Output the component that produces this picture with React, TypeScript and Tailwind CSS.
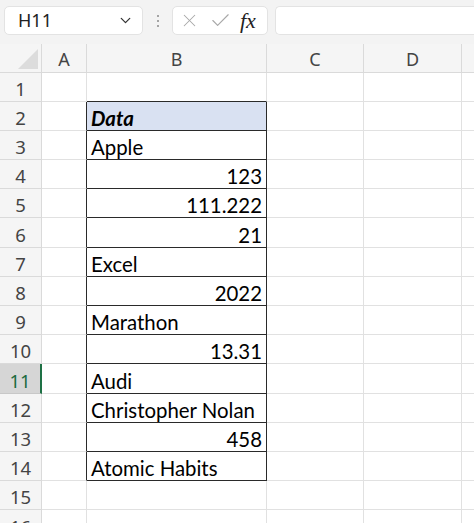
import { ChevronDown, X, Check } from "lucide-react";

type Cell = { text: string; align?: "left" | "right"; head?: boolean };

const rows: Record<number, Cell> = {
  2: { text: "Data", head: true },
  3: { text: "Apple" },
  4: { text: "123", align: "right" },
  5: { text: "111.222", align: "right" },
  6: { text: "21", align: "right" },
  7: { text: "Excel" },
  8: { text: "2022", align: "right" },
  9: { text: "Marathon" },
  10: { text: "13.31", align: "right" },
  11: { text: "Audi" },
  12: { text: "Christopher Nolan" },
  13: { text: "458", align: "right" },
  14: { text: "Atomic Habits" },
};

const uiFont = { fontFamily: '"Noto Sans", "Open Sans", sans-serif' };
const cellFont = { fontFamily: 'Lato, "Noto Sans", sans-serif' };

function FormulaBar() {
  return (
    <div className="flex h-[44px] items-start bg-[#f3f3f3] pt-[6px] pl-[4px]">
      <div
        className="flex h-[29px] w-[139px] items-center justify-between rounded-[5px] border border-[#e3e3e3] bg-white pl-[13px] pr-[8px] text-[18px] text-[#222]"
        style={uiFont}
      >
        <span>H11</span>
        <ChevronDown size={17} strokeWidth={1.8} className="text-[#333]" />
      </div>
      <div className="flex h-[29px] w-[29px] flex-col items-center justify-center gap-[3px]">
        <span className="h-[2px] w-[2px] rounded-full bg-[#8a8a8a]" />
        <span className="h-[2px] w-[2px] rounded-full bg-[#8a8a8a]" />
        <span className="h-[2px] w-[2px] rounded-full bg-[#8a8a8a]" />
      </div>
      <div className="flex h-[29px] w-[96px] items-center rounded-[5px] border border-[#e3e3e3] bg-white pl-[6px]">
        <X size={21} strokeWidth={1.2} className="text-[#a8a8a8]" />
        <Check size={23} strokeWidth={1.2} className="ml-[9px] text-[#a8a8a8]" />
        <span
          className="ml-[8px] text-[22px] italic leading-none text-[#222]"
          style={{ fontFamily: '"Liberation Serif", "DejaVu Serif", serif' }}
        >
          fx
        </span>
      </div>
      <div className="ml-[7px] h-[29px] flex-1 rounded-l-[5px] border border-r-0 border-[#e3e3e3] bg-white" />
    </div>
  );
}

function ColumnHeader() {
  const cols = ["A", "B", "C", "D"];
  const widths = ["w-[45px]", "w-[180px]", "w-[97px]", "w-[98px]"];
  return (
    <div className="flex h-[28.5px] bg-[#f5f5f5] text-[18px] text-[#444]" style={uiFont}>
      <div className="relative w-[42px] shrink-0 border-r border-b border-[#dadada]">
        <div className="absolute right-[3px] bottom-[3px] h-0 w-0 border-b-[20px] border-l-[20px] border-b-[#dcdcdc] border-l-transparent" />
      </div>
      {cols.map((c, i) => (
        <div
          key={c}
          className={`${widths[i]} flex shrink-0 items-center justify-center border-r border-b border-[#dadada] pt-[3px]`}
        >
          {c}
        </div>
      ))}
      <div className="flex-1 border-b border-[#dadada]" />
    </div>
  );
}

function Row({ n }: { n: number }) {
  const cell = rows[n];
  const inTable = n >= 2 && n <= 14;
  const selected = n === 11;
  return (
    <div className="flex h-[29.2px] shrink-0">
      <div
        className={`flex w-[42px] shrink-0 items-center justify-center border-b pt-[4px] text-[18.5px] ${
          selected
            ? "border-r-2 border-b-[#c8c8c8] border-r-[#1e7145] bg-[#d6d6d6] text-[#1e6b41]"
            : "border-r border-[#dadada] bg-[#f5f5f5] text-[#444]"
        }`}
        style={uiFont}
      >
        {n}
      </div>
      <div
        className={`w-[45px] shrink-0 border-b border-r border-b-[#e1e1e1] ${
          inTable ? "border-r-[#2a2a2a]" : "border-r-[#e1e1e1]"
        } bg-white`}
      />
      <div
        className={`flex w-[180px] shrink-0 items-end border-r border-b px-[4px] text-[20.4px] leading-[24px] text-black ${
          inTable ? "border-[#2a2a2a]" : n === 1 ? "border-r-[#e1e1e1] border-b-[#2a2a2a]" : "border-[#e1e1e1]"
        } ${cell?.head ? "bg-[#d9e1f2] font-bold italic" : "bg-white"} ${
          cell?.align === "right" ? "justify-end" : "justify-start"
        }`}
        style={cellFont}
      >
        {cell?.text}
      </div>
      <div className="w-[97px] shrink-0 border-r border-b border-[#e1e1e1] bg-white" />
      <div className="w-[98px] shrink-0 border-r border-b border-[#e1e1e1] bg-white" />
      <div className="flex-1 border-b border-[#e1e1e1] bg-white" />
    </div>
  );
}

export default function App() {
  return (
    <div className="h-[523px] w-[474px] overflow-hidden bg-white">
      <FormulaBar />
      <ColumnHeader />
      <div className="flex flex-col">
        {Array.from({ length: 16 }, (_, i) => (
          <Row key={i + 1} n={i + 1} />
        ))}
      </div>
    </div>
  );
}
